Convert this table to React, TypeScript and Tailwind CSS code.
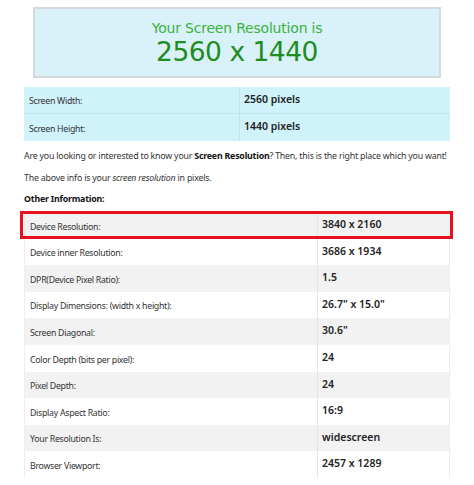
const other: [string, string][] = [
  ['Device Resolution:', '3840 x 2160'],
  ['Device inner Resolution:', '3686 x 1934'],
  ['DPR(Device Pixel Ratio):', '1.5'],
  ['Display Dimensions: (width x height):', '26.7" x 15.0"'],
  ['Screen Diagonal:', '30.6"'],
  ['Color Depth (bits per pixel):', '24'],
  ['Pixel Depth:', '24'],
  ['Display Aspect Ratio:', '16:9'],
  ['Your Resolution Is:', 'widescreen'],
  ['Browser Viewport:', '2457 x 1289'],
]

export default function App() {
  return (
    <main
      className="w-[474px] h-[485px] overflow-hidden bg-white text-[#333] px-[24px] pt-[7px]"
      style={{ fontFamily: '"Noto Sans", "Open Sans", sans-serif' }}
    >
      {/* result box */}
      <div className="mx-[9px] h-[71px] border-2 border-[#d3dadd] bg-[#d9f1f9] flex flex-col items-center justify-center pt-[2px]"
        style={{ fontFamily: '"DejaVu Sans", Verdana, sans-serif' }}>
        <p className="text-[14px] leading-[16px] text-[#3cb33c] tracking-[-0.2px]">Your Screen Resolution is</p>
        <p className="text-[26.5px] leading-[32px] text-[#1e8c1e] tracking-[-0.5px]">2560 x 1440</p>
      </div>

      {/* width / height */}
      <div className="mt-[9px] bg-[#cff2fb]">
        {[
          ['Screen Width:', '2560 pixels'],
          ['Screen Height:', '1440 pixels'],
        ].map(([k, v], i) => (
          <div key={k} className={`grid grid-cols-[216px_1fr] h-[27px] ${i === 0 ? 'border-b border-[#c2e6ee]' : ''}`}>
            <div className="border-r border-[#c2e6ee] pl-[5px] flex items-center pt-[4px] text-[8.8px] tracking-[-0.3px]">{k}</div>
            <div className="pl-[4px] pt-[5px] text-[10.5px] font-semibold text-[#222]">{v}</div>
          </div>
        ))}
      </div>

      <p className="mt-[8px] text-[8.8px] leading-[14px] tracking-[-0.2px] whitespace-nowrap">
        Are you looking or interested to know your <b className="text-[#111]">Screen Resolution</b>? Then, this is the right place which you want!
      </p>
      <p className="mt-[8px] text-[8.8px] leading-[14px] tracking-[-0.2px]">
        The above info is your <i>screen resolution</i> in pixels.
      </p>
      <p className="mt-[7px] text-[8.8px] leading-[14px] tracking-[-0.2px] font-bold text-[#111]">Other Information:</p>

      {/* other info */}
      <div className="mt-[6px] border-x border-[#eee]">
        {other.map(([k, v], i) => (
          <div
            key={k}
            className={`relative grid grid-cols-[293px_1fr] h-[26.6px] ${i % 2 === 0 ? 'bg-[#f2f2f2]' : 'bg-white'}`}
          >
            <div className="border-r border-[#e6e6e6] pl-[5px] flex items-center pt-[4px] text-[8.8px] tracking-[-0.3px]">{k}</div>
            <div className="pl-[4px] pt-[5px] text-[10.5px] font-semibold text-[#222]">{v}</div>
            {i === 0 && (
              <div className="absolute -left-[5px] -right-[4px] top-[-1px] bottom-[0px] border-[3px] border-[#e8101c]" />
            )}
          </div>
        ))}
      </div>
    </main>
  )
}
